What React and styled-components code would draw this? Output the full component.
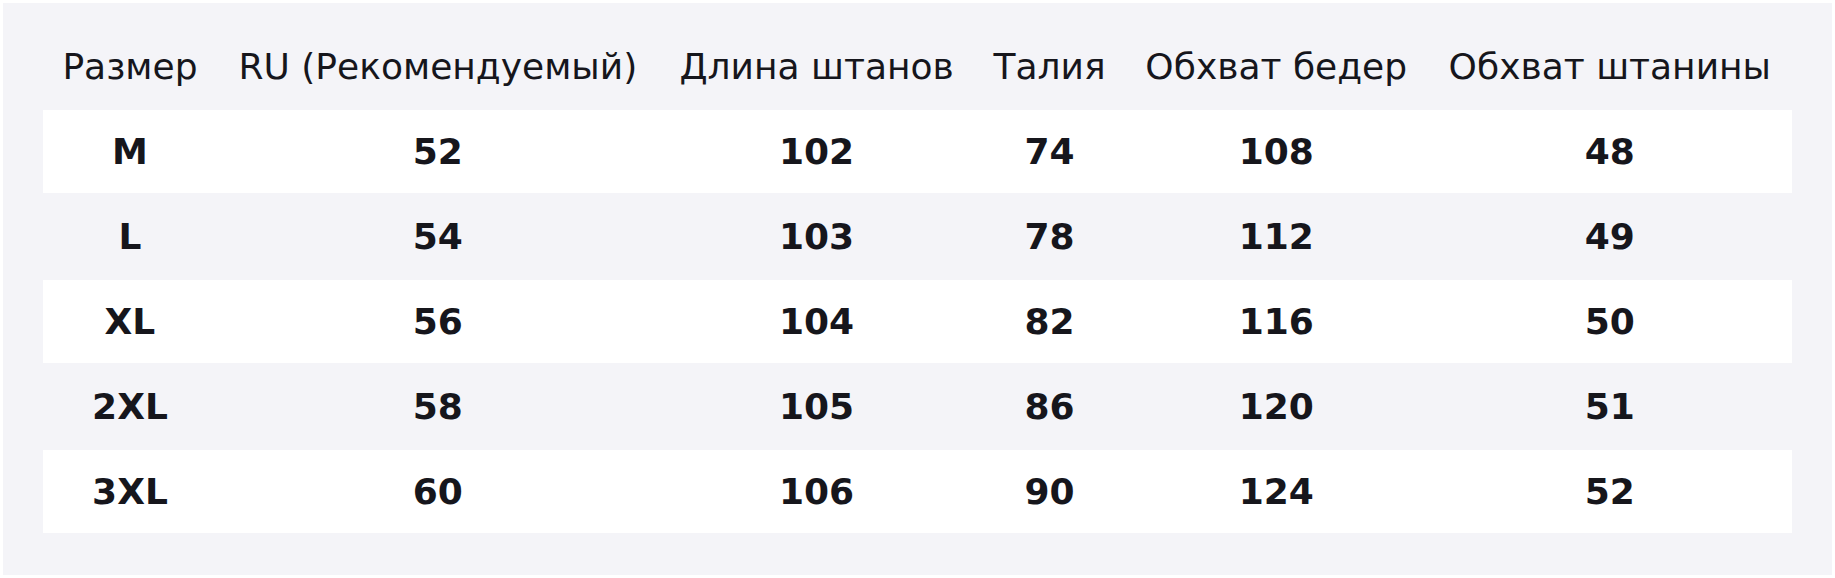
import React from 'react'
import styled, { createGlobalStyle } from 'styled-components'

const GlobalStyle = createGlobalStyle`
  html, body {
    margin: 0;
    padding: 0;
    background: #ffffff;
  }
  body {
    font-family: "DejaVu Sans", "Liberation Sans", sans-serif;
    overflow: hidden;
  }
`

const Sheet = styled.div`
  margin: 3px;
  height: calc(100vh - 6px);
  box-sizing: border-box;
  padding: 20px 40px;
  background: #f4f4f8;
`

const Table = styled.table`
  width: 100%;
  border-collapse: separate;
  border-spacing: 0 2px;
  color: #16161c;
  font-size: 36px;
`

const HeadCell = styled.th`
  height: 83px;
  padding: 0 18px;
  font-weight: 400;
  white-space: nowrap;
  text-align: center;
`

const Row = styled.tr`
  background: ${(p) => (p.$light ? '#ffffff' : 'transparent')};
`

const Cell = styled.td`
  height: 83px;
  padding: 0 18px;
  font-weight: 700;
  text-align: center;
  white-space: nowrap;
`

const columns = [
  'Размер',
  'RU (Рекомендуемый)',
  'Длина штанов',
  'Талия',
  'Обхват бедер',
  'Обхват штанины',
]

const sizes = [
  ['M', 52, 102, 74, 108, 48],
  ['L', 54, 103, 78, 112, 49],
  ['XL', 56, 104, 82, 116, 50],
  ['2XL', 58, 105, 86, 120, 51],
  ['3XL', 60, 106, 90, 124, 52],
]

export default function App() {
  return (
    <>
      <GlobalStyle />
      <Sheet>
        <Table>
          <thead>
            <tr>
              {columns.map((c) => (
                <HeadCell key={c}>{c}</HeadCell>
              ))}
            </tr>
          </thead>
          <tbody>
            {sizes.map((row, i) => (
              <Row key={row[0]} $light={i % 2 === 0}>
                {row.map((v, j) => (
                  <Cell key={j}>{v}</Cell>
                ))}
              </Row>
            ))}
          </tbody>
        </Table>
      </Sheet>
    </>
  )
}
